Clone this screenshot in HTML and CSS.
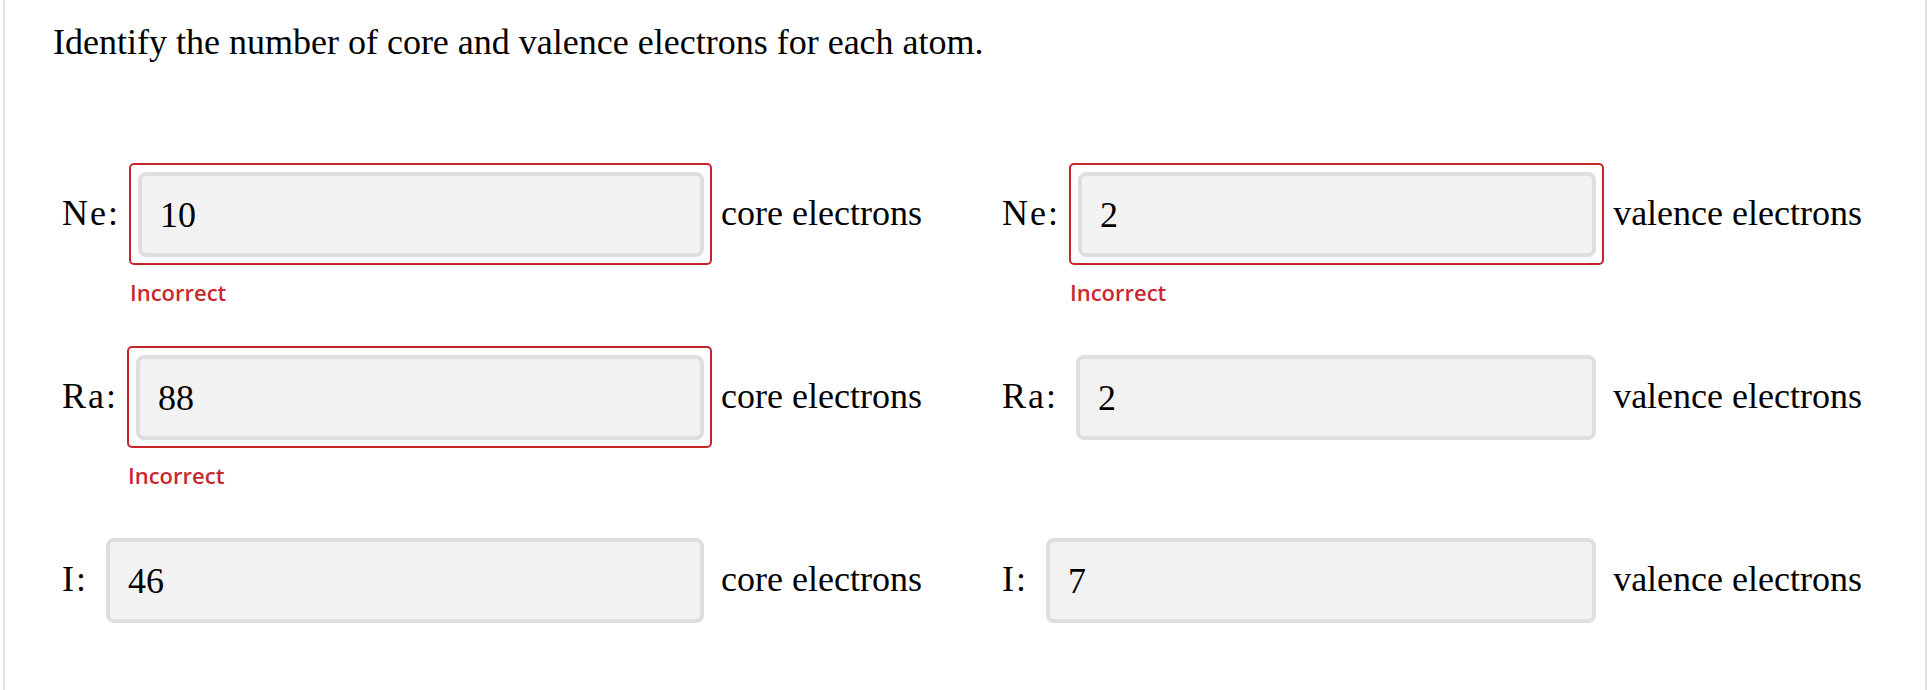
FILE: index.html
```html
<!DOCTYPE html>
<html lang="en">
<head>
<meta charset="utf-8">
<title>Core and valence electrons</title>
<link rel="stylesheet" href="styles.css">
</head>
<body>
<main class="card">
  <p class="prompt">Identify the number of core and valence electrons for each atom.</p>
  <div class="rows">
    <div class="row">
      <div class="item">
        <span class="label">Ne:</span>
        <div class="field">
          <div class="box incorrect"><input class="answer" type="text" value="10"></div>
          <div class="feedback">Incorrect</div>
        </div>
        <span class="suffix">core electrons</span>
      </div>
      <div class="item">
        <span class="label">Ne:</span>
        <div class="field">
          <div class="box incorrect"><input class="answer" type="text" value="2"></div>
          <div class="feedback">Incorrect</div>
        </div>
        <span class="suffix">valence electrons</span>
      </div>
    </div>
    <div class="row">
      <div class="item">
        <span class="label">Ra:</span>
        <div class="field">
          <div class="box incorrect"><input class="answer" type="text" value="88"></div>
          <div class="feedback">Incorrect</div>
        </div>
        <span class="suffix">core electrons</span>
      </div>
      <div class="item">
        <span class="label">Ra:</span>
        <div class="field">
          <div class="box"><input class="answer" type="text" value="2"></div>
        </div>
        <span class="suffix">valence electrons</span>
      </div>
    </div>
    <div class="row">
      <div class="item">
        <span class="label">I:</span>
        <div class="field">
          <div class="box"><input class="answer" type="text" value="46"></div>
        </div>
        <span class="suffix">core electrons</span>
      </div>
      <div class="item">
        <span class="label">I:</span>
        <div class="field">
          <div class="box"><input class="answer" type="text" value="7"></div>
        </div>
        <span class="suffix">valence electrons</span>
      </div>
    </div>
  </div>
</main>
</body>
</html>
```

FILE: styles.css
```css
html, body {
  margin: 0;
  padding: 0;
  background: #ffffff;
}

body {
  font-family: "Liberation Serif", "Times New Roman", serif;
  font-size: 36px;
  color: #000;
}

.card {
  margin: 0 3px;
  min-height: 100vh;
  box-sizing: border-box;
  border-left: 2px solid #e2e2e2;
  border-right: 2px solid #e2e2e2;
  padding: 22px 63px 0 48px;
  background: #fff;
}

.prompt {
  margin: 0 0 109px 0;
  line-height: 41px;
}

.rows {
  padding-left: 9px;
}

.row {
  display: grid;
  grid-template-columns: 1fr 1fr;
  column-gap: 80px;
  margin-bottom: 49px;
}

.item {
  display: flex;
  align-items: flex-start;
}

.label {
  line-height: 83px;
  margin-right: 18px;
  letter-spacing: 2px;
  white-space: nowrap;
}

.suffix {
  line-height: 83px;
  margin-left: 17px;
  white-space: nowrap;
}

.field {
  flex: 1;
  min-width: 0;
  display: flex;
  flex-direction: column;
}

.box {
  display: flex;
}

.box.incorrect {
  margin: -9px -8px -8px -9px;
  padding: 7px 6px 6px 7px;
  border: 2px solid #c4262c;
  border-radius: 5px;
}

.answer {
  flex: 1;
  min-width: 0;
  box-sizing: border-box;
  height: 85px;
  margin: 0;
  padding: 0 18px;
  border: 4px solid #dedede;
  border-radius: 8px;
  background: #f2f2f2;
  font-family: "Liberation Serif", "Times New Roman", serif;
  font-size: 36px;
  color: #000;
  outline: none;
}

.feedback {
  margin: 21px 0 0 -8px;
  line-height: 28px;
  font-family: "Open Sans", "Noto Sans", sans-serif;
  font-weight: 600;
  font-size: 22px;
  color: #c8282e;
}
```
